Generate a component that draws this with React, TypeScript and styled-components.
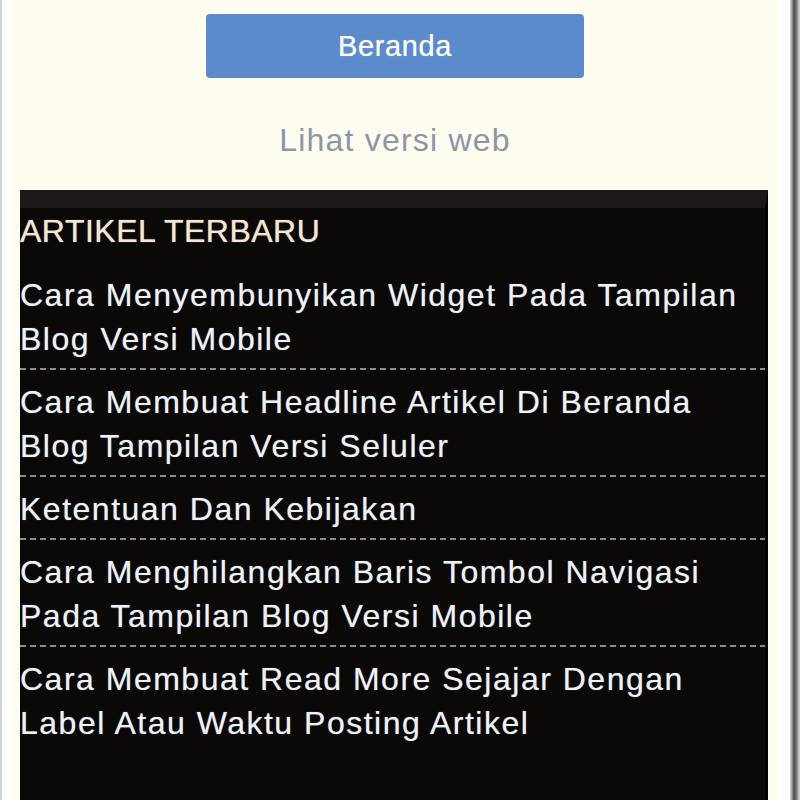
import React from "react";
import styled, { createGlobalStyle } from "styled-components";

const GlobalStyle = createGlobalStyle`
  html, body {
    margin: 0;
    padding: 0;
    background: #ffffff;
  }

  body {
    font-family: "Liberation Sans", Arial, sans-serif;
  }
`;

// 바깥 프레임 (스크린샷 테두리 + 오른쪽 그림자)
const Frame = styled.div`
  width: 800px;
  height: 800px;
  overflow: hidden;

  display: flex;
  box-sizing: border-box;

  border-left: 2px solid #d2d2d2;
  padding-left: 10px;
`;

const Screen = styled.div`
  width: 766px;
  height: 100%;

  background-color: #fefdf0;

  display: flex;
  flex-direction: column;
`;

const FrameGap = styled.div`
  width: 12px;
  height: 100%;
  background-color: #ffffff;
`;

const Shadow = styled.div`
  width: 10px;
  height: 100%;
  background: linear-gradient(
    to right,
    #d8d8d8 0,
    #9a9a9a 2px,
    #4a4a4a 4px,
    #6a6a6a 6px,
    #a8a8a8 8px,
    #dcdcdc 10px
  );
`;

const Top = styled.div`
  height: 190px;

  display: flex;
  flex-direction: column;
  align-items: center;

  padding-top: 14px;
  box-sizing: border-box;
`;

const HomeButton = styled.a`
  width: 378px;
  height: 64px;

  background-color: #5b8bca;
  border-radius: 4px;

  display: flex;
  align-items: center;
  justify-content: center;

  color: #ffffff;
  font-size: 29px;
  letter-spacing: 0.6px;
  text-decoration: none;
  text-shadow: 0 0 1px rgba(255, 255, 255, 0.6);
`;

const WebLink = styled.a`
  margin-top: 44px;

  color: #8c96a9;
  font-size: 32px;
  letter-spacing: 1.2px;
  text-decoration: none;
`;

const Panel = styled.div`
  flex: 1;

  margin: 0 10px 0 8px;

  background-color: #0b0908;
  border-top: 18px solid #1b1917;
  border-right: 3px solid #020202;
`;

const Heading = styled.h2`
  margin: 0;
  padding-top: 1px;

  color: #f3e6d2;
  font-size: 32px;
  font-weight: normal;
  letter-spacing: 0.5px;
  line-height: 44px;
  text-shadow: 0 0 1px rgba(243, 230, 210, 0.8);
`;

const List = styled.ul`
  list-style: none;
  margin: 10px 0 0;
  padding: 0;
`;

const Item = styled.li<{ last?: boolean }>`
  padding: 10px 0 9px;

  background-image: ${({ last }) =>
    last
      ? "none"
      : "repeating-linear-gradient(to right, #8a8a8a 0 6px, transparent 6px 10px)"};
  background-size: 100% 2px;
  background-position: bottom left;
  background-repeat: no-repeat;

  a {
    color: #edf2f7;
    font-size: 32px;
    letter-spacing: 1.5px;
    line-height: 44px;
    text-decoration: none;
    text-shadow: 0 0 1px rgba(220, 232, 245, 0.6);
  }
`;

const articles = [
  "Cara Menyembunyikan Widget Pada Tampilan Blog Versi Mobile",
  "Cara Membuat Headline Artikel Di Beranda Blog Tampilan Versi Seluler",
  "Ketentuan Dan Kebijakan",
  "Cara Menghilangkan Baris Tombol Navigasi Pada Tampilan Blog Versi Mobile",
  "Cara Membuat Read More Sejajar Dengan Label Atau Waktu Posting Artikel",
];

function App() {
  return (
    <>
      <GlobalStyle />
      <Frame>
        <Screen>
          <Top>
            <HomeButton href="#">Beranda</HomeButton>
            <WebLink href="#">Lihat versi web</WebLink>
          </Top>

          <Panel>
            <Heading>ARTIKEL TERBARU</Heading>
            <List>
              {articles.map((title, i) => (
                <Item key={title} last={i === articles.length - 1}>
                  <a href="#">{title}</a>
                </Item>
              ))}
            </List>
          </Panel>
        </Screen>
        <FrameGap />
        <Shadow />
      </Frame>
    </>
  );
}

export default App;
